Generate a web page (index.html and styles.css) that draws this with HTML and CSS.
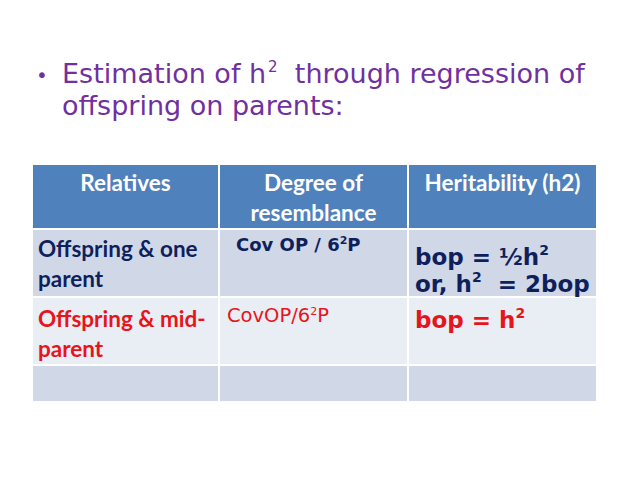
FILE: index.html
```html
<!DOCTYPE html>
<html>
<head>
<meta charset="utf-8">
<link rel="stylesheet" href="styles.css">
</head>
<body>
<div class="slide">
  <ul class="bullets">
    <li>Estimation of h<sup>2</sup>&nbsp; through regression of offspring on parents:</li>
  </ul>
  <table class="tbl">
    <colgroup><col class="c1"><col class="c2"><col class="c3"></colgroup>
    <tr class="head">
      <th>Relatives</th>
      <th>Degree of resemblance</th>
      <th>Heritability (h2)</th>
    </tr>
    <tr class="odd navy r1">
      <td><div class="rel">Offspring &amp; one parent</div></td>
      <td><div class="cov cov1">Cov OP / 6<sup>2</sup>P</div></td>
      <td><div class="her">bop = ½h<sup>2</sup><br>or, h<sup>2</sup>&nbsp; = 2bop</div></td>
    </tr>
    <tr class="even red r2">
      <td><div class="rel">Offspring &amp; mid-parent</div></td>
      <td><div class="cov cov2">CovOP/6<sup>2</sup>P</div></td>
      <td><div class="her">bop = h<sup>2</sup></div></td>
    </tr>
    <tr class="odd empty">
      <td></td><td></td><td></td>
    </tr>
  </table>
</div>
</body>
</html>
```
FILE: styles.css
```css
html, body {
  margin: 0;
  padding: 0;
  background: #ffffff;
}
.slide {
  width: 638px;
  height: 478px;
  padding-top: 58px;
  box-sizing: border-box;
}
.bullets {
  margin: 0;
  padding: 0 30px 0 62px;
  list-style: none;
  font-family: "DejaVu Sans", sans-serif;
  font-size: 27px;
  line-height: 32px;
  color: #7030a0;
}
.bullets li {
  position: relative;
}
.bullets li::before {
  content: "•";
  position: absolute;
  left: -26px;
  top: 1px;
  font-size: 20px;
}
.bullets sup {
  font-size: 15px;
  line-height: 0;
  vertical-align: 11px;
  margin-left: 2px;
}
.tbl {
  margin: 41px 0 0 31px;
  width: 565px;
  border-collapse: collapse;
  table-layout: fixed;
  font-family: "Lato", "Open Sans", sans-serif;
}
.c1 { width: 187px; }
.c2 { width: 189px; }
.c3 { width: 189px; }
.tbl th, .tbl td {
  border: 2px solid #ffffff;
  vertical-align: top;
  padding: 0;
}
.head th {
  background: #4f81bd;
  color: #ffffff;
  font-weight: 700;
  font-size: 22.5px;
  line-height: 30px;
  height: 64px;
  padding: 3px 4px 0;
  text-align: center;
  box-sizing: border-box;
}
.odd td { background: #d0d8e8; }
.even td { background: #e9edf4; }
.navy { color: #0f1f5c; }
.red { color: #e8141b; }
.r1 > td > div, .r2 > td > div {
  height: 66px;
  box-sizing: border-box;
}
.rel {
  font-weight: 700;
  font-size: 22.5px;
  line-height: 30px;
  padding: 4px 2px 0 5px;
}
.r2 .rel { padding-top: 6px; }
.cov {
  font-family: "DejaVu Sans", sans-serif;
  font-size: 18px;
  font-weight: 700;
}
.cov1 { padding: 4px 0 0 16px; }
.cov2 {
  padding: 6px 0 0 7px;
  font-weight: 400;
  font-size: 19.5px;
}
.cov sup {
  font-size: 11px;
  line-height: 0;
  vertical-align: 7px;
}
.her {
  font-family: "DejaVu Sans", sans-serif;
  font-weight: 700;
  font-size: 23px;
  line-height: 27px;
  padding: 0 0 0 6px;
  white-space: nowrap;
}
.r1 .her { padding-top: 14px; }
.r2 .her { padding-top: 9px; }
.her sup {
  font-size: 14px;
  line-height: 0;
  vertical-align: 10px;
}
.empty td { height: 35px; }
```
